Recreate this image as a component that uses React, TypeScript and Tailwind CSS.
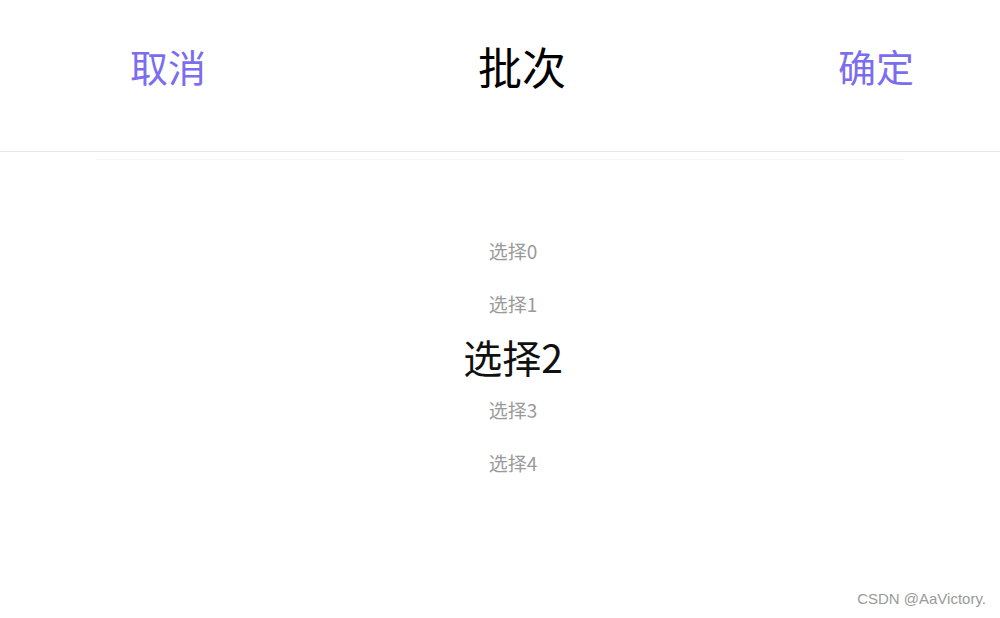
import React from "react";

const options = ["选择0", "选择1", "选择2", "选择3", "选择4"];
const selected = 2;

export default function App() {
  return (
    <div
      className="relative h-[618px] w-full overflow-hidden bg-white"
      style={{ fontFamily: '"Noto Sans CJK SC", "Noto Sans", sans-serif' }}
    >
      <div className="flex h-[152px] items-center justify-between border-b border-[#ede6e8] pb-[20px] pl-[130px] pr-[86px]">
        <button className="text-[38px] leading-none text-[#7b6cf0]">取消</button>
        <div className="text-[44px] leading-none text-black">批次</div>
        <button className="text-[38px] leading-none text-[#7b6cf0]">确定</button>
      </div>
      <div className="mx-[95px] mt-[7px] h-px bg-[#f8f7f8]" />

      <div className="flex flex-col items-center pl-[26px] pt-[64px]">
        {options.map((label, i) => (
          <div key={label} className="flex h-[53px] items-center justify-center">
            <span
              className={
                i === selected
                  ? "text-[39px] leading-none text-[#111]"
                  : "text-[19px] leading-none text-[#9a9a9a]"
              }
            >
              {label}
            </span>
          </div>
        ))}
      </div>

      <div
        className="absolute bottom-[8px] right-[14px] text-[15px] text-[#9a9a9a]"
        style={{ fontFamily: '"Liberation Sans", Arial, sans-serif' }}
      >
        CSDN @AaVictory.
      </div>
    </div>
  );
}
